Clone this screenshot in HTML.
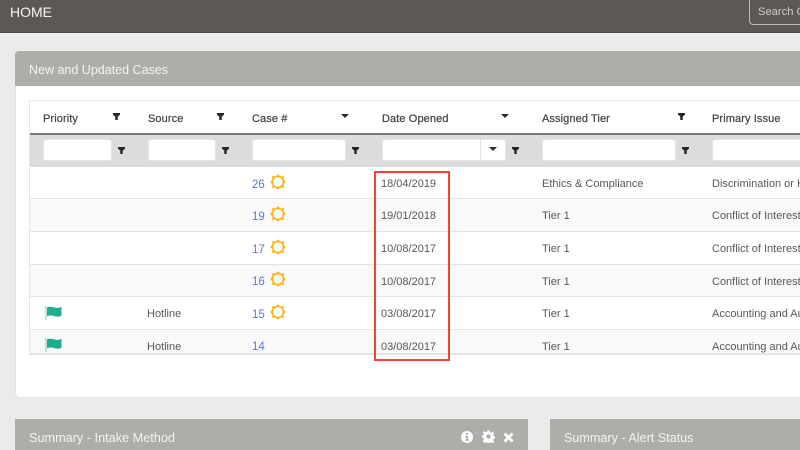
<!DOCTYPE html>
<html>
<head>
<meta charset="utf-8">
<style>
html,body{margin:0;padding:0;width:800px;height:450px;overflow:hidden;background:#ebebeb;font-family:"Liberation Sans","DejaVu Sans",sans-serif;}
#p{position:absolute;left:0;top:0;width:800px;height:450px;overflow:hidden;background:#ebebeb;}
#p div,#p span,#p svg{position:absolute;box-sizing:border-box;}
.t{white-space:nowrap;font-size:11px;line-height:14px;color:#5b5753;letter-spacing:0;margin-top:1px;}
.h{white-space:nowrap;font-size:11px;line-height:14px;color:#4a4644;letter-spacing:.1px;-webkit-text-stroke:.25px #4a4644;margin-top:1px;}
.l{color:#5b78d8;font-size:11.5px;}
.w{white-space:nowrap;color:#f4f3f2;font-size:12.6px;line-height:16px;}
.row{left:30px;width:800px;border-bottom:1px solid #e4e4e4;}
.inp{top:139px;height:22px;background:#fff;border-radius:3px;border:1px solid #e6e6e6;}
</style>
</head>
<body>
<div id="p">
<svg width="0" height="0" style="left:0;top:0">
<defs>
<symbol id="fun" viewBox="0 0 8 8"><path d="M0 0H8V1.800L5.400 4.200V8H2.600V4.200L0 1.800Z" fill="#262626"/></symbol>
<symbol id="sun" viewBox="0 0 16 16"><g fill="#fdb515"><circle cx="8" cy="8" r="5.500" fill="none" stroke="#fdb515" stroke-width="1.600"/><path d="M6 2L8 .2 10 2zM6 14l2 1.800L10 14zM2 6L.2 8 2 10zM14 6l1.800 2L14 10zM2.300 4.700L2 2l2.700.3zM13.700 4.700L14 2l-2.700.3zM2.300 11.300L2 14l2.700-.3zM13.700 11.300L14 14l-2.700-.3z"/></g></symbol>
<symbol id="flag" viewBox="0 0 17 14"><path d="M.5 0h1v14h-1z" fill="#8cc5a2"/><path d="M2 1.500C5 .2 7.500 .8 10 1.600 12 2.100 14 2 16.500 1v8.700C14 10.800 12 10.800 10 10.300 7.500 9.500 5 9.100 2 10.300Z" fill="#1cae8e"/></symbol>
</defs>
</svg>

<!-- Top bar -->
<div style="left:0;top:0;width:800px;height:33px;background:#5d5856;border-bottom:1px solid #4e4a48"></div>
<div style="left:10px;top:3px;color:#f5f4f3;font-size:14px;line-height:18px;white-space:nowrap;">HOME</div>
<div style="left:749px;top:-6px;width:70px;height:31px;border:1px solid #bdbab8;border-radius:4px;"></div>
<div class="t" style="left:758px;top:5px;color:#cfccca;font-size:11.2px;margin:0;">Search C</div>

<!-- Main panel -->
<div style="left:15px;top:51px;width:800px;height:347px;background:#fff;border:1px solid #e2e2e2;border-radius:4px;"></div>
<div style="left:15px;top:51px;width:800px;height:35px;background:#afadaa;border-radius:4px 4px 0 0;"></div>
<div class="w" style="left:29px;top:62px;font-size:12.5px;">New and Updated Cases</div>

<!-- Table -->
<div style="left:29px;top:100px;width:790px;height:255px;background:#fff;border:1px solid #e6e6e6;"></div>
<div style="left:30px;top:133px;width:780px;height:2px;background:#7b7978;"></div>
<div style="left:30px;top:135px;width:780px;height:32px;background:#dcdcdc;"></div>

<div class="h" style="left:43px;top:111px;">Priority</div>
<div class="h" style="left:148px;top:111px;">Source</div>
<div class="h" style="left:252px;top:111px;">Case #</div>
<div class="h" style="left:382px;top:111px;">Date Opened</div>
<div class="h" style="left:542px;top:111px;">Assigned Tier</div>
<div class="h" style="left:712px;top:111px;">Primary Issue</div>

<svg width="7" height="7" style="left:113px;top:113px"><use href="#fun"/></svg>
<svg width="7" height="7" style="left:217px;top:113px"><use href="#fun"/></svg>
<svg width="8" height="4" viewBox="0 0 8 4" style="left:341px;top:114px"><path d="M0 0H8L4 4Z" fill="#2b2b2b"/></svg>
<svg width="8" height="4" viewBox="0 0 8 4" style="left:501px;top:114px"><path d="M0 0H8L4 4Z" fill="#2b2b2b"/></svg>
<svg width="7" height="7" style="left:678px;top:113px"><use href="#fun"/></svg>

<!-- Filter row -->
<div class="inp" style="left:43px;width:69px;"></div>
<div class="inp" style="left:148px;width:68px;"></div>
<div class="inp" style="left:252px;width:94px;"></div>
<div class="inp" style="left:382px;width:124px;"></div>
<div style="left:480px;top:140px;width:1px;height:20px;background:#e4e4e4;"></div>
<svg width="8" height="4" viewBox="0 0 8 4" style="left:489px;top:147px"><path d="M0 0H8L4 4Z" fill="#2b2b2b"/></svg>
<div class="inp" style="left:542px;width:134px;"></div>
<div class="inp" style="left:712px;width:100px;"></div>
<svg width="7" height="7" style="left:118px;top:147px"><use href="#fun"/></svg>
<svg width="7" height="7" style="left:222px;top:147px"><use href="#fun"/></svg>
<svg width="7" height="7" style="left:352px;top:147px"><use href="#fun"/></svg>
<svg width="7" height="7" style="left:512px;top:147px"><use href="#fun"/></svg>
<svg width="7" height="7" style="left:682px;top:147px"><use href="#fun"/></svg>

<!-- Rows -->
<div class="row" style="top:167px;height:32px;background:#fff;"></div>
<div class="row" style="top:199px;height:33px;background:#f9f9f9;"></div>
<div class="row" style="top:232px;height:33px;background:#fff;"></div>
<div class="row" style="top:265px;height:32px;background:#f9f9f9;"></div>
<div class="row" style="top:297px;height:33px;background:#fff;"></div>
<div class="row" style="top:330px;height:25px;background:#f9f9f9;border-bottom:2px solid #e4e4e4;"></div>

<div class="t l" style="left:252px;top:177px;">26</div>
<div class="t l" style="left:252px;top:209px;">19</div>
<div class="t l" style="left:252px;top:242px;">17</div>
<div class="t l" style="left:252px;top:274px;">16</div>
<div class="t l" style="left:252px;top:307px;">15</div>
<div class="t l" style="left:252px;top:339px;">14</div>

<svg width="16" height="16" style="left:270px;top:174px"><use href="#sun"/></svg>
<svg width="16" height="16" style="left:270px;top:206px"><use href="#sun"/></svg>
<svg width="16" height="16" style="left:270px;top:239px"><use href="#sun"/></svg>
<svg width="16" height="16" style="left:270px;top:271px"><use href="#sun"/></svg>
<svg width="16" height="16" style="left:270px;top:304px"><use href="#sun"/></svg>

<svg width="17" height="14" style="left:45px;top:306px"><use href="#flag"/></svg>
<svg width="17" height="14" style="left:45px;top:338px"><use href="#flag"/></svg>

<div class="t" style="left:147px;top:306px;">Hotline</div>
<div class="t" style="left:147px;top:339px;">Hotline</div>

<div class="t" style="left:381px;top:176px;">18/04/2019</div>
<div class="t" style="left:381px;top:208px;">19/01/2018</div>
<div class="t" style="left:381px;top:241px;">10/08/2017</div>
<div class="t" style="left:381px;top:274px;">10/08/2017</div>
<div class="t" style="left:381px;top:306px;">03/08/2017</div>
<div class="t" style="left:381px;top:339px;">03/08/2017</div>

<div class="t" style="left:542px;top:176px;">Ethics &amp; Compliance</div>
<div class="t" style="left:542px;top:208px;">Tier 1</div>
<div class="t" style="left:542px;top:241px;">Tier 1</div>
<div class="t" style="left:542px;top:274px;">Tier 1</div>
<div class="t" style="left:542px;top:306px;">Tier 1</div>
<div class="t" style="left:542px;top:339px;">Tier 1</div>

<div class="t" style="left:712px;top:176px;">Discrimination or H</div>
<div class="t" style="left:712px;top:208px;">Conflict of Interest</div>
<div class="t" style="left:712px;top:241px;">Conflict of Interest</div>
<div class="t" style="left:712px;top:274px;">Conflict of Interest</div>
<div class="t" style="left:712px;top:306px;">Accounting and Au</div>
<div class="t" style="left:712px;top:339px;">Accounting and Au</div>

<!-- Red highlight -->
<div style="left:374px;top:171px;width:76px;height:190px;border:2px solid #f44336;"></div>

<!-- Bottom panels -->
<div style="left:15px;top:419px;width:513px;height:31px;background:#afadaa;"></div>
<div class="w" style="left:29px;top:430px;font-size:12.7px;">Summary - Intake Method</div>
<div style="left:550px;top:419px;width:250px;height:31px;background:#afadaa;"></div>
<div class="w" style="left:564px;top:430px;">Summary - Alert Status</div>

<svg width="12" height="12" viewBox="0 0 12 12" style="left:461px;top:431px"><circle cx="6" cy="6" r="6" fill="#fff"/><rect x="5" y="2" width="2" height="1.800" fill="#afadaa"/><path d="M4.200 5h2.800v3.600h1v1.100H4.200V8.600h1V6.100h-1z" fill="#afadaa"/></svg>
<svg width="13" height="13" viewBox="0 0 13 13" style="left:482px;top:430px"><path d="M5.400.5h2.200l.3 1.700 1.300.6 1.500-1 1.500 1.500-1 1.500.5 1.300 1.300.3v2.200l-1.300.3-.5 1.300 1 1.500-1.500 1.500-1.500-1-1.300.5-.3 1.300H5.400l-.3-1.300-1.300-.5-1.500 1L.8 10.700l1-1.500-.5-1.300L0 7.600V5.400l1.300-.3.500-1.300-1-1.500L2.300 1.300l1.500 1 1.300-.6z" fill="#fff"/><circle cx="6.500" cy="6.500" r="2.200" fill="#afadaa"/></svg>
<svg width="11" height="11" viewBox="0 0 11 11" style="left:503px;top:432px"><path d="M2.500 0.500L5.500 3.500L8.500 0.500L10.500 2.500L7.500 5.500L10.500 8.500L8.500 10.500L5.500 7.500L2.500 10.500L0.500 8.500L3.500 5.500L0.500 2.500Z" fill="#fff"/></svg>
</div>
</body>
</html>
